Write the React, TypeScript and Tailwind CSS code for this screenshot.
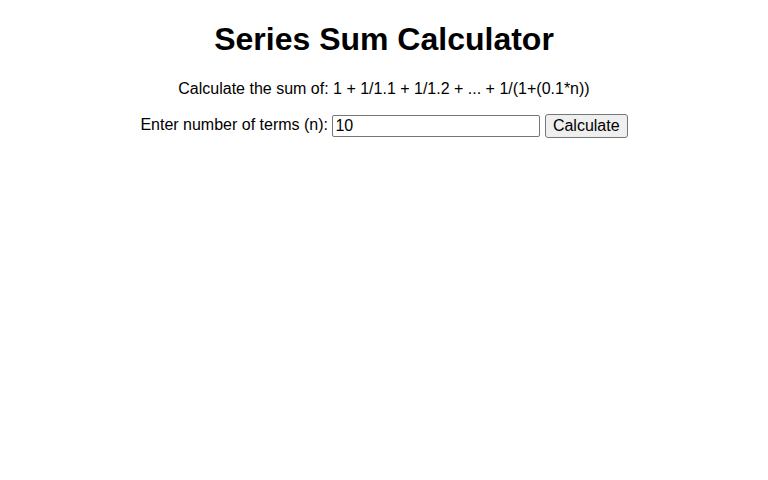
import React, { useState } from 'react';

export default function App() {
    const [n, setN] = useState('10');

    return (
        <div className="min-h-screen bg-white text-black text-center font-['Liberation_Sans',Arial,sans-serif]">
            <h1 className="text-[32px] font-bold leading-[normal] pt-[21.44px] mb-[21.44px]">Series Sum Calculator</h1>
            <p className="text-base leading-[normal] mb-4">Calculate the sum of: 1 + 1/1.1 + 1/1.2 + ... + 1/(1+(0.1*n))</p>
            <div className="text-base leading-[normal]">
                <label htmlFor="terms">Enter number of terms (n):</label>{' '}
                <input
                    id="terms"
                    type="text"
                    value={n}
                    onChange={e => setN(e.target.value)}
                    className="w-[208px] h-[22px] px-[2px] py-[1px] border border-[#767676] rounded-[2px] text-base leading-[normal] align-middle outline-none bg-white"
                />{' '}
                <button className="h-6 px-[7px] py-[1px] border border-[#767676] rounded-[3px] bg-[#efefef] text-base leading-[normal] align-middle text-black">
                    Calculate
                </button>
            </div>
        </div>
    );
}
